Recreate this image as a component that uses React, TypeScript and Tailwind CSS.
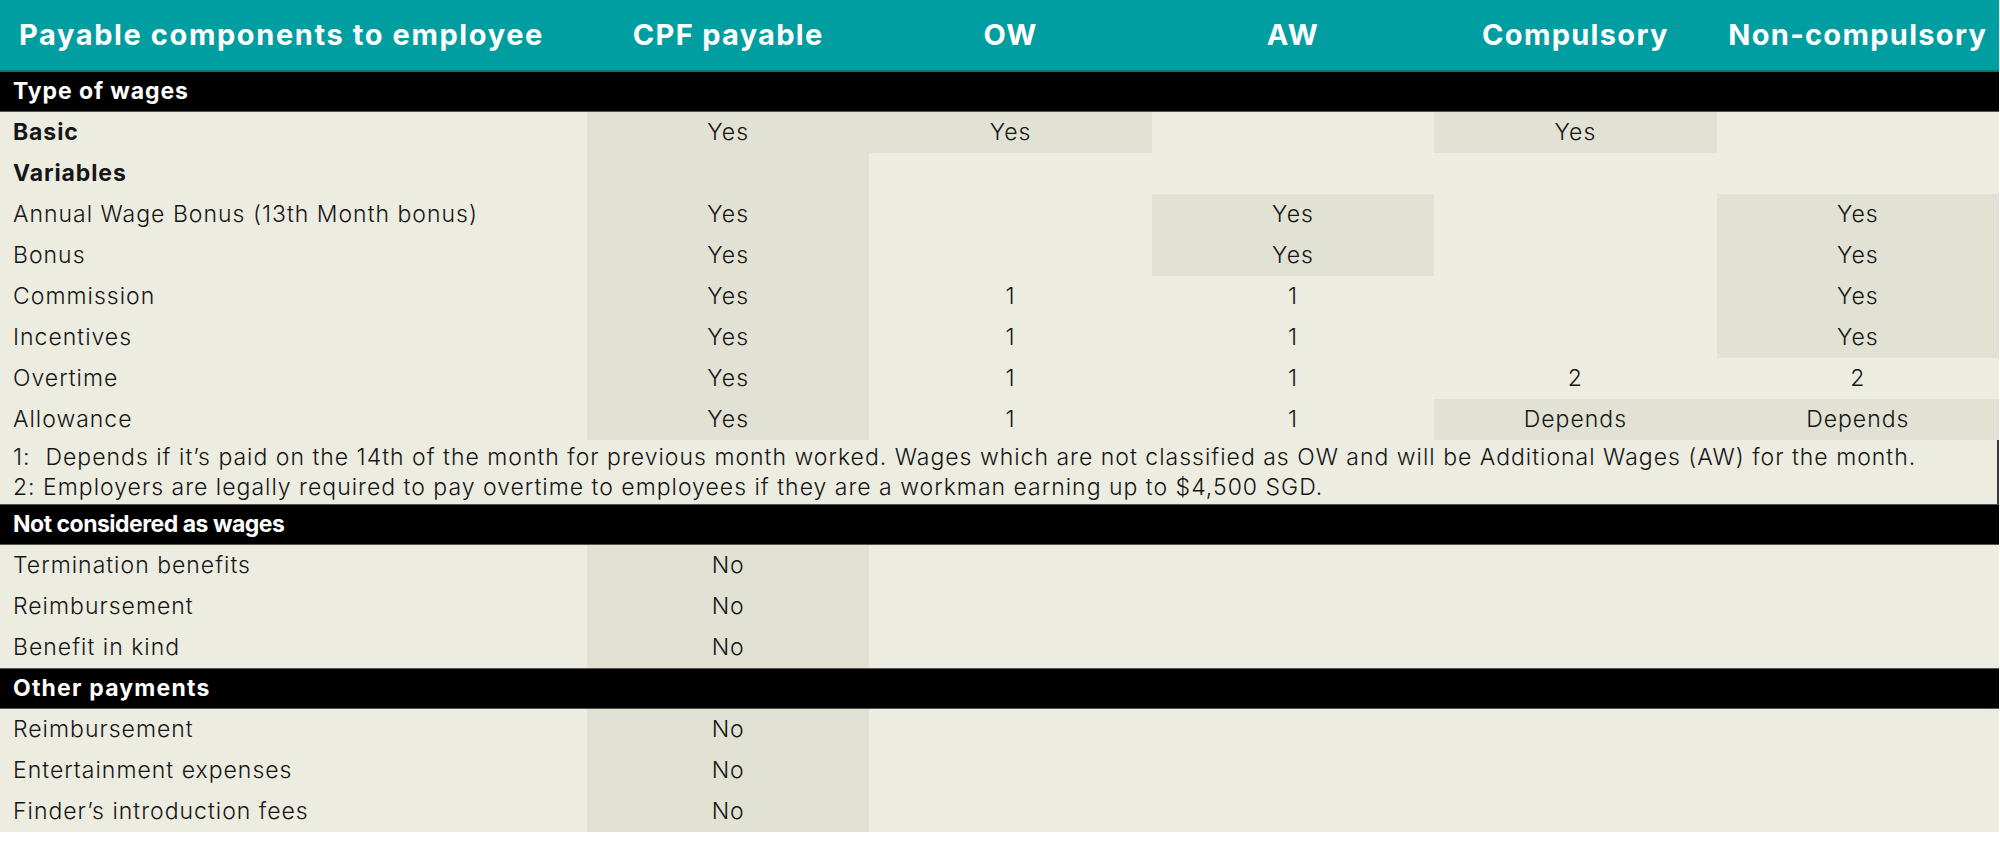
import React from 'react'

type Cell = [string, boolean]

interface Row {
  label: string
  bold?: boolean
  cells: Cell[]
}

const wageRows: Row[] = [
  { label: 'Basic', bold: true, cells: [['Yes', true], ['Yes', true], ['', false], ['Yes', true], ['', false]] },
  { label: 'Variables', bold: true, cells: [['', true], ['', false], ['', false], ['', false], ['', false]] },
  { label: 'Annual Wage Bonus (13th Month bonus)', cells: [['Yes', true], ['', false], ['Yes', true], ['', false], ['Yes', true]] },
  { label: 'Bonus', cells: [['Yes', true], ['', false], ['Yes', true], ['', false], ['Yes', true]] },
  { label: 'Commission', cells: [['Yes', true], ['1', false], ['1', false], ['', false], ['Yes', true]] },
  { label: 'Incentives', cells: [['Yes', true], ['1', false], ['1', false], ['', false], ['Yes', true]] },
  { label: 'Overtime', cells: [['Yes', true], ['1', false], ['1', false], ['2', false], ['2', false]] },
  { label: 'Allowance', cells: [['Yes', true], ['1', false], ['1', false], ['Depends', true], ['Depends', true]] },
]

const noRow = (label: string): Row => ({
  label,
  cells: [['No', true], ['', false], ['', false], ['', false], ['', false]],
})

const notWageRows: Row[] = [noRow('Termination benefits'), noRow('Reimbursement'), noRow('Benefit in kind')]
const otherRows: Row[] = [noRow('Reimbursement'), noRow('Entertainment expenses'), noRow('Finder’s introduction fees')]

const HEADERS = ['CPF payable', 'OW', 'AW', 'Compulsory', 'Non-compulsory']

// ── Section bar (black) ──
function SectionBar({ title, tracking }: { title: string; tracking: string }) {
  return (
    <div
      className={`col-span-6 h-[41px] bg-black border-y border-[#55554f] flex items-center pl-[13px] text-white font-bold text-[23px] ${tracking}`}
    >
      {title}
    </div>
  )
}

// ── Data row ──
function DataRow({ row }: { row: Row }) {
  return (
    <>
      <div
        className={`h-[41px] flex items-center pl-[13px] text-[23px] text-[#161616] ${
          row.bold ? 'font-bold tracking-[0.9px]' : 'font-light tracking-[1px]'
        }`}
      >
        {row.label}
      </div>
      {row.cells.map(([text, gray], i) => (
        <div
          key={i}
          className={`h-[41px] flex items-center justify-center text-[23px] font-light tracking-[1px] text-[#161616] ${
            gray ? 'bg-[#e1e2d3]' : ''
          }`}
        >
          {text}
        </div>
      ))}
    </>
  )
}

export default function App() {
  return (
    <div className="w-[2000px] h-[841px] bg-white" style={{ fontFamily: "Inter, 'Noto Sans', sans-serif" }}>
      <div className="grid grid-cols-[587px_repeat(5,1fr)] w-[1999px] bg-[#ecece1]">
        {/* Header */}
        <div className="h-[71px] bg-[#009ea1] border-b border-[#07797b] flex items-center pl-[19px] text-white font-bold text-[29px] tracking-[1.6px]">
          Payable components to employee
        </div>
        {HEADERS.map((h) => (
          <div
            key={h}
            className="h-[71px] bg-[#009ea1] border-b border-[#07797b] flex items-center justify-center text-white font-bold text-[29px] tracking-[1.3px]"
          >
            {h}
          </div>
        ))}

        <SectionBar title="Type of wages" tracking="tracking-[0.9px]" />
        {wageRows.map((r) => (
          <DataRow key={r.label} row={r} />
        ))}

        {/* Footnotes */}
        <div className="col-span-6 h-[64px] flex flex-col justify-center pl-[13px] text-[23px] font-light tracking-[1px] leading-[30px] text-[#161616] border-r-2 border-[#3a3a36] whitespace-pre">
          <span>1:  Depends if it’s paid on the 14th of the month for previous month worked. Wages which are not classified as OW and will be Additional Wages (AW) for the month.</span>
          <span>2: Employers are legally required to pay overtime to employees if they are a workman earning up to $4,500 SGD.</span>
        </div>

        <SectionBar title="Not considered as wages" tracking="tracking-[-0.5px]" />
        {notWageRows.map((r) => (
          <DataRow key={r.label} row={r} />
        ))}

        <SectionBar title="Other payments" tracking="tracking-[1.2px]" />
        {otherRows.map((r) => (
          <DataRow key={r.label} row={r} />
        ))}
      </div>
    </div>
  )
}
